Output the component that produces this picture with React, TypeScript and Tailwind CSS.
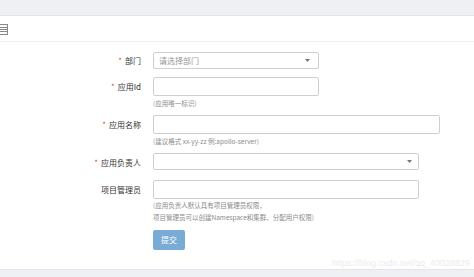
import { ReactNode } from 'react'

const FONT = { fontFamily: '"Noto Sans CJK SC", "Noto Sans", sans-serif' }

const Label = ({ text, required }: { text: string; required?: boolean }) => (
  <div className="w-[141px] shrink-0 text-right text-[8px] font-normal text-[#333] leading-[19px]">
    {required && <span className="text-[#d9534f] mr-[3px]">*</span>}
    {text}
  </div>
)

const Caret = () => (
  <svg width="5" height="3" viewBox="0 0 5 3" className="mr-[3px]">
    <path d="M0 0 L5 0 L2.5 3 Z" fill="#777" />
  </svg>
)

const Help = ({ children }: { children: ReactNode }) => (
  <div className="text-[6.5px] text-[#8a8a8a] leading-[12px] mt-[1px]">{children}</div>
)

const App = () => {
  return (
    <div className="w-[474px] h-[277px] bg-[#eef0f4] flex flex-col overflow-hidden" style={FONT}>
      <div className="h-[16px] shrink-0 border-b border-[#e3e5ea]" />
      <div className="bg-white flex-1 flex flex-col">
        <div className="h-[26px] shrink-0 border-b border-[#f2f2f2] flex items-center">
          <svg width="9" height="11" viewBox="0 0 9 11" className="ml-[-1px] mt-[2px]">
            <rect x="0.5" y="0.5" width="8" height="10" fill="none" stroke="#888" strokeWidth="1" />
            <path d="M0.5 3.5 H8.5 M0.5 5.5 H8.5 M0.5 7.5 H8.5" stroke="#888" strokeWidth="1" />
          </svg>
        </div>
        <div className="pt-[9px] flex flex-col">
          <div className="flex items-start mb-[7px]">
            <Label text="部门" required />
            <div className="ml-[12px] mt-[1px] w-[166px] h-[17px] border border-[#cfcfcf] rounded-[2px] flex items-center justify-between px-[5px]">
              <span className="text-[8px] text-[#999]">请选择部门</span>
              <Caret />
            </div>
          </div>
          <div className="flex items-start mb-[6px]">
            <Label text="应用Id" required />
            <div className="ml-[12px]">
              <div className="w-[166px] h-[19px] border border-[#cfcfcf] rounded-[2px]" />
              <Help>(应用唯一标识)</Help>
            </div>
          </div>
          <div className="flex items-start mb-[6px]">
            <Label text="应用名称" required />
            <div className="ml-[12px]">
              <div className="w-[287px] h-[19px] border border-[#cfcfcf] rounded-[2px]" />
              <Help>(建议格式 xx-yy-zz 例:apollo-server)</Help>
            </div>
          </div>
          <div className="flex items-start mb-[8px]">
            <Label text="应用负责人" required />
            <div className="ml-[12px] w-[266px] h-[17px] border border-[#cfcfcf] rounded-[2px] flex items-center justify-end px-[3px]">
              <Caret />
            </div>
          </div>
          <div className="flex items-start mb-[7px]">
            <Label text="项目管理员" />
            <div className="ml-[12px]">
              <div className="w-[266px] h-[19px] border border-[#cfcfcf] rounded-[2px]" />
              <div className="text-[6.5px] text-[#8a8a8a] leading-[12px]">
                <div>(应用负责人默认具有项目管理员权限，</div>
                <div>项目管理员可以创建Namespace和集群、分配用户权限)</div>
              </div>
            </div>
          </div>
          <div className="flex">
            <div className="w-[153px] shrink-0" />
            <button className="w-[32px] h-[20px] rounded-[2px] bg-[#7aabd6] text-white text-[8px] leading-none">
              提交
            </button>
          </div>
          <div className="text-right pr-[4px] mt-[8px] text-[9px] leading-[10px] text-[#ececec] font-['Liberation_Sans']">
            https://blog.csdn.net/qq_40028829
          </div>
        </div>
      </div>
      <div className="h-[8px] shrink-0 border-t border-[#e3e5ea]" />
    </div>
  )
}

export default App
